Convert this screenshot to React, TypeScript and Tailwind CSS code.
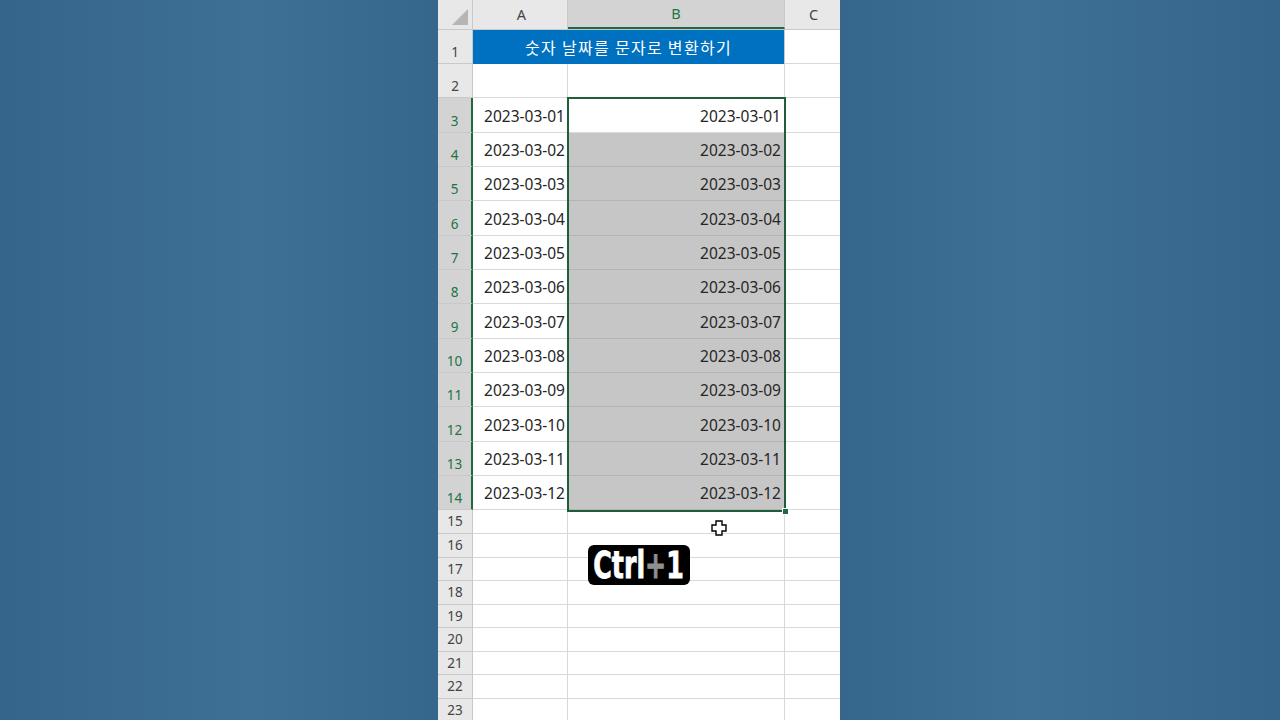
const tallRows = [34, 34, 35, 34, 34, 35, 34, 34, 35, 34, 34, 35, 34, 34];
const shortRows = [24, 24, 23, 24, 23, 24, 23, 24, 24];

function rowHeight(h: number) {
  if (h === 35) return "h-[35px]";
  if (h === 34) return "h-[34px]";
  if (h === 23) return "h-[23px]";
  return "h-[24px]";
}

const date = (n: number) => `2023-03-${String(n).padStart(2, "0")}`;

function RowHeader({ n, selected }: { n: number; selected: boolean }) {
  return (
    <div
      className={
        "w-[35px] shrink-0 flex items-end justify-center pb-[2px] text-[13.5px] leading-none border-b border-[#c9c9c9] " +
        (selected
          ? "bg-[#d3d3d3] text-[#217346] border-r-2 border-r-[#1e6b40]"
          : "bg-[#e8e8e8] text-[#444] border-r border-r-[#c9c9c9]")
      }
    >
      <span className="mb-[2px]">{n}</span>
    </div>
  );
}

export default function App() {
  return (
    <div className="w-[1280px] h-[720px] overflow-hidden flex bg-[linear-gradient(90deg,#35658b_0%,#3e6f95_20%,#35668c_34.2%,#35668c_65.7%,#3e6f95_80%,#35658b_100%)] font-['Noto_Sans','Noto_Sans_CJK_KR',sans-serif]">
      <div className="w-[438px] shrink-0" />
      <div className="relative w-[402px] shrink-0 h-[720px] bg-white overflow-hidden">
        {/* column headers */}
        <div className="flex h-[30px] border-b border-[#c9c9c9] bg-[#e8e8e8] text-[14.5px] text-[#444]">
          <div className="w-[35px] shrink-0 border-r border-[#c9c9c9] flex items-end justify-end p-[3px]">
            <svg width="18" height="18" viewBox="0 0 18 18">
              <polygon points="17,1 17,17 1,17" fill="#b5b5b5" />
            </svg>
          </div>
          <div className="w-[95px] shrink-0 border-r border-[#c9c9c9] flex items-center justify-center pl-[3px]">A</div>
          <div className="w-[217px] shrink-0 border-r border-[#c9c9c9] bg-[#d3d3d3] text-[#217346] flex items-center justify-center border-b-2 border-b-[#1e6b40]">B</div>
          <div className="flex-1 flex items-center justify-center pl-[2px]">C</div>
        </div>

        {/* tall rows 1-14 */}
        {tallRows.map((h, i) => {
          const n = i + 1;
          const sel = n >= 3;
          return (
            <div key={n} className={"flex " + rowHeight(h)}>
              <RowHeader n={n} selected={sel} />
              {n === 1 ? (
                <div className="w-[312px] shrink-0 bg-[#0070c0] text-white text-[16px] tracking-[1.3px] flex items-center justify-center font-['Noto_Sans_CJK_KR',sans-serif] border-r border-[#c9c9c9]">
                  숫자 날짜를 문자로 변환하기
                </div>
              ) : (
                <>
                  <div className="w-[95px] shrink-0 border-r border-b border-[#d9d9d9] flex items-center justify-end pr-[2px] pt-[3px] text-[15.5px] text-[#262626]">
                    {n >= 3 ? date(n - 2) : ""}
                  </div>
                  <div
                    className={
                      "w-[217px] shrink-0 border-r flex items-center justify-end pr-[3px] pt-[3px] text-[15.5px] text-[#262626] " +
                      (n >= 4
                        ? "bg-[#c6c6c6] border-b border-[#b4b4b4] border-r-[#d9d9d9]"
                        : "border-b border-[#d9d9d9]")
                    }
                  >
                    {n >= 3 ? date(n - 2) : ""}
                  </div>
                </>
              )}
              <div className="flex-1 border-b border-[#d9d9d9]" />
            </div>
          );
        })}

        {/* short rows 15-23 */}
        {shortRows.map((h, i) => {
          const n = i + 15;
          return (
            <div key={n} className={"flex " + rowHeight(h)}>
              <div className="w-[35px] shrink-0 bg-[#e8e8e8] text-[#444] text-[13.5px] border-r border-b border-[#c9c9c9] flex items-center justify-center">
                {n}
              </div>
              <div className="w-[95px] shrink-0 border-r border-b border-[#d9d9d9]" />
              <div className="w-[217px] shrink-0 border-r border-b border-[#d9d9d9]" />
              <div className="flex-1 border-b border-[#d9d9d9]" />
            </div>
          );
        })}

        {/* selection border B3:B14 */}
        <div className="absolute left-[129px] top-[97px] w-[219px] h-[415px] border-2 border-[#1e5e3a] pointer-events-none" />
        <div className="absolute left-[344px] top-[508px] w-[7px] h-[7px] bg-[#1e6b40] border border-white" />

        {/* cursor */}
        <svg className="absolute left-[273px] top-[520px]" width="16" height="16" viewBox="0 0 16 16">
          <polygon
            points="5,1 11,1 11,5 15,5 15,11 11,11 11,15 5,15 5,11 1,11 1,5 5,5"
            fill="white"
            stroke="black"
            strokeWidth="1.4"
          />
        </svg>

        {/* Ctrl+1 badge */}
        <div className="absolute left-[150px] top-[545px] w-[102px] h-[40px] rounded-[6px] bg-black flex items-center justify-center overflow-hidden">
          <span className="inline-block scale-x-[0.76] whitespace-nowrap text-[37px] leading-none font-bold font-['DejaVu_Sans_Condensed','DejaVu_Sans',sans-serif] text-white tracking-[0px] [-webkit-text-stroke:0.8px_white]">
            Ctrl<span className="text-[#8f8f8f] [-webkit-text-stroke:0.8px_#8f8f8f]">+</span>1
          </span>
        </div>
      </div>
    </div>
  );
}
